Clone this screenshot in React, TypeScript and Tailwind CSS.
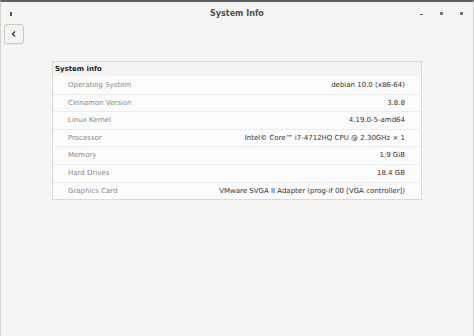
const rows: { label: string; value: string }[] = [
  { label: "Operating System", value: "debian 10.0 (x86-64)" },
  { label: "Cinnamon Version", value: "3.8.8" },
  { label: "Linux Kernel", value: "4.19.0-5-amd64" },
  { label: "Processor", value: "Intel© Core™ i7-4712HQ CPU @ 2.30GHz × 1" },
  { label: "Memory", value: "1.9 GiB" },
  { label: "Hard Drives", value: "18.4 GB" },
  { label: "Graphics Card", value: "VMware SVGA II Adapter (prog-if 00 [VGA controller])" },
];

function TitleBar() {
  return (
    <div className="grid h-[22px] grid-cols-[1fr_auto_1fr] items-center px-[9px] pt-[1px]">
      <div className="flex items-center">
        <span className="block h-[4px] w-[2px] bg-[#555]" />
      </div>
      <h1 className="text-[8px] font-bold text-[#505050]">System Info</h1>
      <div className="flex items-center justify-end gap-[17px] pr-[1px]">
        <span className="mt-[2px] block h-[1px] w-[3px] bg-[#666]" />
        <span className="block h-[3px] w-[3px] bg-[#777]" />
        <span className="block h-[3px] w-[3px] bg-[#777]" />
      </div>
    </div>
  );
}

export default function App() {
  return (
    <div
      className="flex h-[336px] w-[474px] flex-col border-t-2 border-x border-[#5f5f5f] border-x-[#d0d0d0] bg-[#f6f5f4] text-[7px]"
      style={{ fontFamily: '"DejaVu Sans", sans-serif' }}
    >
      <TitleBar />
      <div className="pl-[3px]">
        <button
          type="button"
          className="flex h-[20px] w-[20px] items-center justify-center rounded-[3px] border border-[#cdc7c2] bg-[#f4f3f2] shadow-[0_1px_0_rgba(0,0,0,0.05)]"
        >
          <svg width="8" height="8" viewBox="0 0 8 8">
            <path d="M5 1.5 2.5 4 5 6.5" fill="none" stroke="#2e2e2e" strokeWidth="1.3" />
          </svg>
        </button>
      </div>
      <section className="mx-auto mt-[17px] w-[370px] border border-[#d9d9d9] bg-[#fbfbfb]">
        <div className="flex h-[14px] items-center bg-[#f3f3f3] px-[2px] font-bold text-[#222]">
          System info
        </div>
        {rows.map((r, i) => (
          <div
            key={r.label}
            className={
              "flex h-[17.6px] items-center justify-between pl-[15px] pr-[16px] " +
              (i > 0 ? "border-t border-[#ececec]" : "")
            }
          >
            <span className="text-[#8a8a8a]">{r.label}</span>
            <span className="text-[#333]">{r.value}</span>
          </div>
        ))}
      </section>
    </div>
  );
}
